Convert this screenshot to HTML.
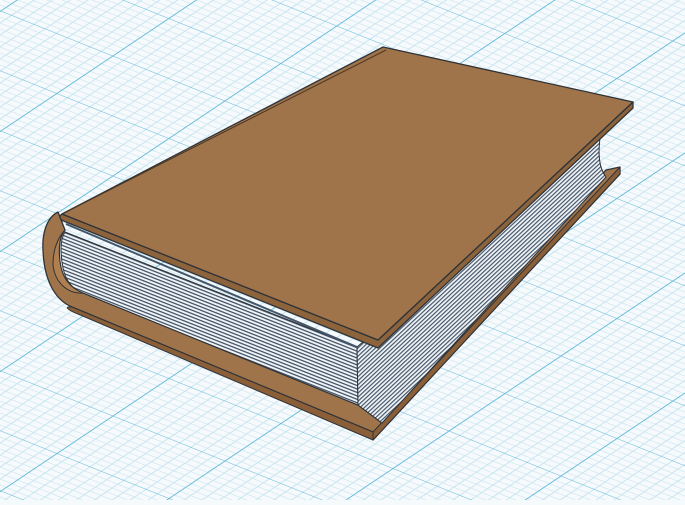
<!DOCTYPE html>
<html><head><style>html,body{margin:0;padding:0;background:#f5fafc;overflow:hidden}</style></head>
<body>
<svg width="685" height="500" viewBox="0 0 685 500" xmlns="http://www.w3.org/2000/svg">
<defs>
<pattern id="g" width="60" height="60" patternUnits="userSpaceOnUse" patternTransform="matrix(1.867,0.75,0.933,-0.625,0,11)">
<rect width="60" height="60" fill="#f6fafc"/>
<g stroke="#c9e5f0" stroke-width="0.6">
<path d="M6 0V60M12 0V60M18 0V60M24 0V60M30 0V60M36 0V60M42 0V60M48 0V60M54 0V60"/>
<path d="M0 6H60M0 12H60M0 18H60M0 24H60M0 30H60M0 36H60M0 42H60M0 48H60M0 54H60"/>
</g>
<g stroke="#62b9da" stroke-width="1.1"><path d="M0 0V60M0 0H60"/></g>
</pattern>
<pattern id="sl" width="6" height="3.2" patternUnits="userSpaceOnUse" patternTransform="rotate(21.5)">
<rect width="6" height="3.2" fill="#f2f5f8"/><rect width="6" height="1.3" fill="#44566a"/>
</pattern>
<pattern id="sr" width="6" height="3" patternUnits="userSpaceOnUse" patternTransform="rotate(-43)">
<rect width="6" height="3" fill="#f2f5f8"/><rect width="6" height="1.2" fill="#44566a"/>
</pattern>
</defs>
<rect width="685" height="500" fill="url(#g)"/>
<g stroke="#2f3338" stroke-width="1.3" stroke-linejoin="round">
<path d="M58 212 C46 218 42 235 43 250 C44 280 55 300 72 307 L373 432 L373 440 L620 174 L620 167 L606 170 L382 423 L358 405 L83 293 C70 288 62 278 60 262 C58 246 60 236 65 230 Z" fill="#a0744a"/>
<path d="M72 307 L373 432 L373 440 L78 314 C70 311 62 306 72 307 Z" fill="#8a5f38" stroke-width="1"/>
<path d="M373 432 L620 167 L620 174 L373 440 Z" fill="#8a5f38" stroke-width="1"/>
<path d="M65 230 C56 240 53 252 53 265 C55 283 68 294 83 293 C70 288 62 278 60 262 C58 246 60 236 65 230 Z" fill="#b07f50" stroke-width="1"/>
<path d="M65 232 L357 347 L358 405 L83 293 C70 288 64 278 62 262 C60 248 61 238 65 232 Z" fill="url(#sl)" stroke-width="1"/>
<path d="M357 347 L600 138 C598 155 599 168 606 177 L382 423 L358 405 Z" fill="url(#sr)" stroke-width="1"/>
<path d="M62 214 L378 340 L633 102 L633 108 L378 348 L66 222 C60 220 58 217 62 214 Z" fill="#8d633b"/>
<path d="M66 224 L357 347" stroke="#44566a" stroke-width="2" fill="none"/>
<path d="M383 47 L633 102 L378 340 L62 214 Z" fill="#a0744a"/>
<path d="M66 212 L386 50" stroke="#4a3522" stroke-width="1" fill="none"/>
</g>
</svg>
</body></html>
